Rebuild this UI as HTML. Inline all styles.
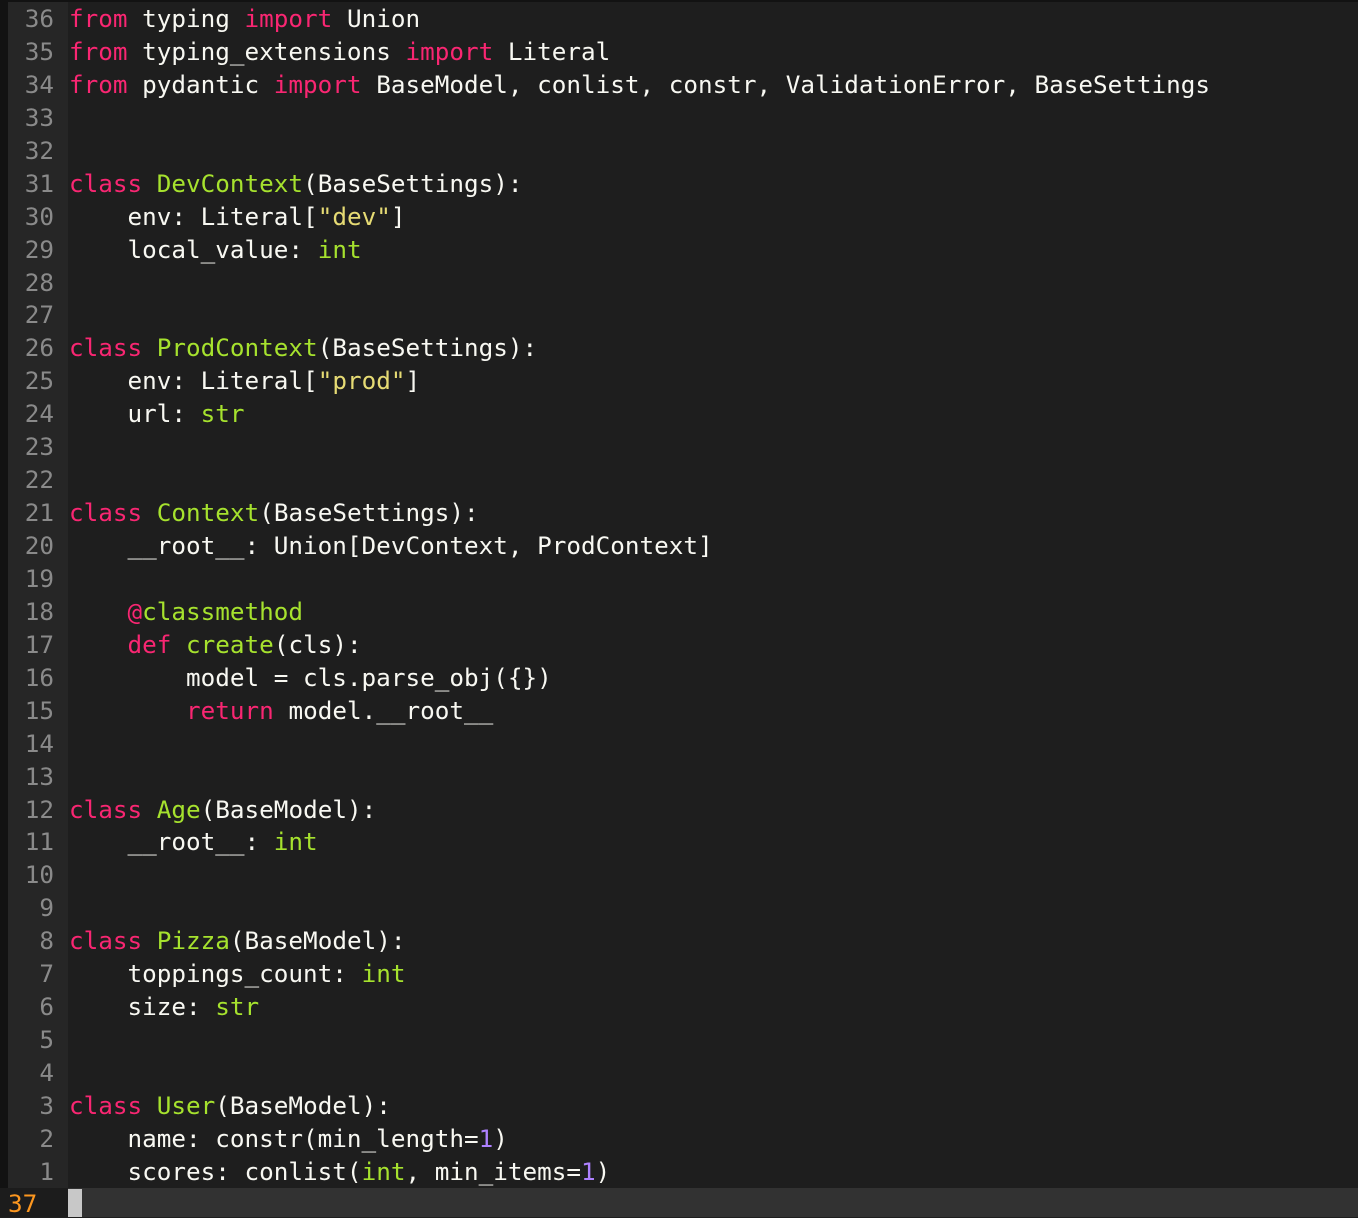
<!DOCTYPE html>
<html><head><meta charset="utf-8"><style>
html,body{margin:0;padding:0;width:1358px;height:1217px;overflow:hidden;background:#1e1e1e}
#wrap{position:absolute;left:0;top:0;width:1358px;height:1217px;background:#1e1e1e}
#lb{position:absolute;left:0;top:0;width:8px;height:1217px;background:#121212}
#tb{position:absolute;left:0;top:0;width:1358px;height:2px;background:#121212}
#gut{position:absolute;left:8px;top:2px;width:60px;height:1186px;background:#262626}
#gut37{position:absolute;left:0;top:1188px;width:68px;height:29px;background:#1c1c1c}
#cur{position:absolute;left:68px;top:1188px;width:1290px;height:29px;background:#323232}
#caret{position:absolute;left:68px;top:1189px;width:14px;height:28px;background:#c8c8c8}
pre{margin:0;position:absolute;top:3px;font-family:"DejaVu Sans Mono","Liberation Mono",monospace;font-size:24.3px;line-height:32.94px;color:#f8f8f2}
#nums{left:8px;width:46px;text-align:right;color:#8a8a8a}
#code{left:69px}
.k{color:#f92672}.c{color:#a6e22e}.s{color:#e6db74}.n{color:#ae81ff}
</style></head><body><div id="wrap">
<div id="tb"></div><div id="lb"></div><div id="gut"></div><div id="gut37"></div><div id="cur"></div><div id="caret"></div>
<pre id="nums">36
35
34
33
32
31
30
29
28
27
26
25
24
23
22
21
20
19
18
17
16
15
14
13
12
11
10
9
8
7
6
5
4
3
2
1
</pre>
<pre style="left:8px;top:1190px;color:#fd971f;font-family:'DejaVu Sans Mono',monospace;font-size:24.3px;line-height:28px">37</pre>
<pre id="code"><span class="k">from</span> typing <span class="k">import</span> Union
<span class="k">from</span> typing_extensions <span class="k">import</span> Literal
<span class="k">from</span> pydantic <span class="k">import</span> BaseModel, conlist, constr, ValidationError, BaseSettings


<span class="k">class</span> <span class="c">DevContext</span>(BaseSettings):
    env: Literal[<span class="s">"dev"</span>]
    local_value: <span class="c">int</span>


<span class="k">class</span> <span class="c">ProdContext</span>(BaseSettings):
    env: Literal[<span class="s">"prod"</span>]
    url: <span class="c">str</span>


<span class="k">class</span> <span class="c">Context</span>(BaseSettings):
    __root__: Union[DevContext, ProdContext]

    <span class="k">@</span><span class="c">classmethod</span>
    <span class="k">def</span> <span class="c">create</span>(cls):
        model = cls.parse_obj({})
        <span class="k">return</span> model.__root__


<span class="k">class</span> <span class="c">Age</span>(BaseModel):
    __root__: <span class="c">int</span>


<span class="k">class</span> <span class="c">Pizza</span>(BaseModel):
    toppings_count: <span class="c">int</span>
    size: <span class="c">str</span>


<span class="k">class</span> <span class="c">User</span>(BaseModel):
    name: constr(min_length=<span class="n">1</span>)
    scores: conlist(<span class="c">int</span>, min_items=<span class="n">1</span>)
</pre>
</div></body></html>
